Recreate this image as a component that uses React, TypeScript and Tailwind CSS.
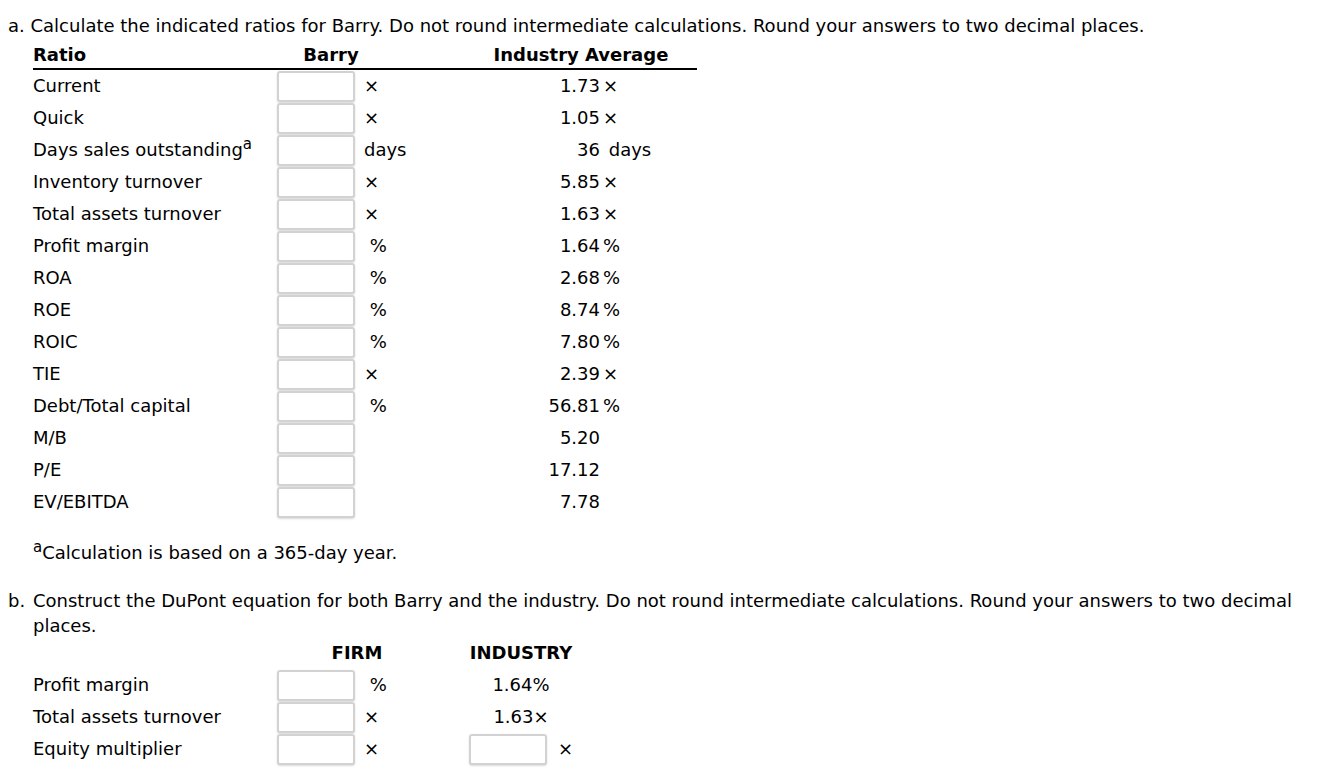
const rows: { label: string; sup?: boolean; unit: string; value: string; vunit: string }[] = [
  { label: "Current", unit: "×", value: "1.73", vunit: "×" },
  { label: "Quick", unit: "×", value: "1.05", vunit: "×" },
  { label: "Days sales outstanding", sup: true, unit: "days", value: "36", vunit: "\u00a0days" },
  { label: "Inventory turnover", unit: "×", value: "5.85", vunit: "×" },
  { label: "Total assets turnover", unit: "×", value: "1.63", vunit: "×" },
  { label: "Profit margin", unit: "\u00a0%", value: "1.64", vunit: "%" },
  { label: "ROA", unit: "\u00a0%", value: "2.68", vunit: "%" },
  { label: "ROE", unit: "\u00a0%", value: "8.74", vunit: "%" },
  { label: "ROIC", unit: "\u00a0%", value: "7.80", vunit: "%" },
  { label: "TIE", unit: "×", value: "2.39", vunit: "×" },
  { label: "Debt/Total capital", unit: "\u00a0%", value: "56.81", vunit: "%" },
  { label: "M/B", unit: "", value: "5.20", vunit: "" },
  { label: "P/E", unit: "", value: "17.12", vunit: "" },
  { label: "EV/EBITDA", unit: "", value: "7.78", vunit: "" },
];

const dupont = [
  { label: "Profit margin", unit: "\u00a0%", industry: "1.64%" },
  { label: "Total assets turnover", unit: "×", industry: "1.63×" },
  { label: "Equity multiplier", unit: "×", industry: "" },
];

function Box() {
  return (
    <div className="h-[31px] w-[78px] shrink-0 rounded-[3px] border-2 border-[#d2d2d2] bg-white shadow-[0_1px_2px_rgba(0,0,0,0.15)]" />
  );
}

export default function App() {
  return (
    <div
      className="min-h-screen bg-white px-2 pt-[14px] text-[18px] leading-6 text-black"
      style={{ fontFamily: "Verdana, 'DejaVu Sans', sans-serif" }}
    >
      {/* part a */}
      <p>
        a. Calculate the indicated ratios for Barry. Do not round intermediate calculations. Round your answers to two decimal places.
      </p>

      <div className="ml-[25px] mt-[3px] w-[664px]">
        <div className="flex h-[29px] items-center border-b-2 border-black font-bold">
          <div className="w-[244px]">Ratio</div>
          <div className="w-[108px] text-center">Barry</div>
          <div className="w-[80px]" />
          <div className="w-[232px] text-center">Industry Average</div>
        </div>

        {rows.map((r) => (
          <div key={r.label} className="flex h-8 items-center">
            <div className="w-[244px]">
              {r.label}
              {r.sup && <sup className="text-[15px]">a</sup>}
            </div>
            <Box />
            <div className="w-[143px] pl-[9px]">{r.unit}</div>
            <div className="w-[102px] text-right">{r.value}</div>
            <div className="pl-[3px]">{r.vunit}</div>
          </div>
        ))}

        <p className="mt-[23px]">
          <sup className="text-[15px]">a</sup>Calculation is based on a 365-day year.
        </p>
      </div>

      {/* part b */}
      <div className="mt-[23px] flex leading-[25px]">
        <div className="w-[25px] shrink-0">b.</div>
        <div>
          Construct the DuPont equation for both Barry and the industry. Do not round intermediate calculations. Round your answers to two decimal places.
        </div>
      </div>

      <div className="ml-[25px] mt-[3px]">
        <div className="flex h-6 items-center font-bold">
          <div className="w-[244px]" />
          <div className="w-[160px] text-center">FIRM</div>
          <div className="w-[168px] text-center">INDUSTRY</div>
        </div>
        <div className="mt-[4px]">
          {dupont.map((d) => (
            <div key={d.label} className="flex h-8 items-center">
              <div className="w-[244px]">{d.label}</div>
              <Box />
              <div className="w-[82px] pl-[9px]">{d.unit}</div>
              <div className="flex w-[168px] items-center justify-center">
                {d.industry ? (
                  d.industry
                ) : (
                  <>
                    <Box />
                    <span className="pl-[11px]">×</span>
                  </>
                )}
              </div>
            </div>
          ))}
        </div>
      </div>
    </div>
  );
}
